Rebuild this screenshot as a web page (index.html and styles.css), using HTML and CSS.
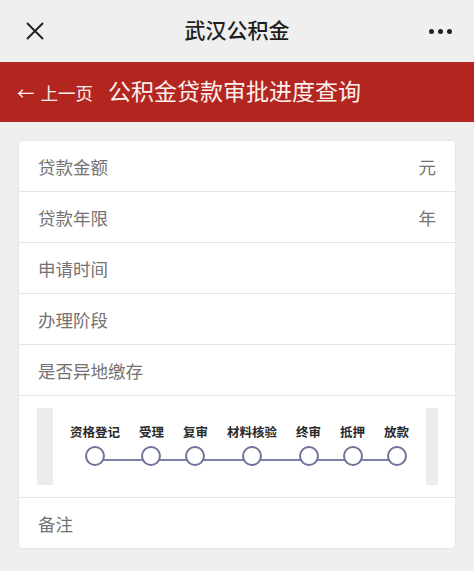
FILE: index.html
```html
<!DOCTYPE html>
<html lang="zh-CN">
<head>
  <meta charset="UTF-8">
  <meta name="viewport" content="width=device-width, initial-scale=1.0">
  <title>武汉公积金</title>
  <link rel="stylesheet" href="styles.css">
</head>
<body>
  <div class="topbar">
    <svg class="close" width="20" height="20" viewBox="0 0 20 20">
      <path d="M2 2 L18 18 M18 2 L2 18" stroke="#222" stroke-width="2" fill="none"/>
    </svg>
    <div class="topbar-title">武汉公积金</div>
    <div class="more"><span></span><span></span><span></span></div>
  </div>

  <div class="header">
    <div class="back"><span class="arrow">←</span>上一页</div>
    <div class="header-title">公积金贷款审批进度查询</div>
  </div>

  <div class="content">
    <div class="card">
      <div class="row"><span>贷款金额</span><span>元</span></div>
      <div class="row"><span>贷款年限</span><span>年</span></div>
      <div class="row"><span>申请时间</span></div>
      <div class="row"><span>办理阶段</span></div>
      <div class="row"><span>是否异地缴存</span></div>

      <div class="progress-row">
        <div class="progress">
          <div class="steps">
            <div class="step"><div class="step-name">资格登记</div><div class="dot"></div></div>
            <div class="step"><div class="step-name">受理</div><div class="dot"></div></div>
            <div class="step"><div class="step-name">复审</div><div class="dot"></div></div>
            <div class="step"><div class="step-name">材料核验</div><div class="dot"></div></div>
            <div class="step"><div class="step-name">终审</div><div class="dot"></div></div>
            <div class="step"><div class="step-name">抵押</div><div class="dot"></div></div>
            <div class="step"><div class="step-name">放款</div><div class="dot"></div></div>
          </div>
        </div>
      </div>

      <div class="row last"><span>备注</span></div>
    </div>
  </div>
</body>
</html>
```

FILE: styles.css
```css
body {
  margin: 0;
  background-color: #efefef;
  font-family: "Noto Sans CJK SC", "Noto Sans", sans-serif;
  height: 571px;
  overflow: hidden;
}

.topbar {
  height: 62px;
  display: flex;
  align-items: center;
  justify-content: space-between;
  padding: 0 22px 0 25px;
  background-color: #efefef;
  position: relative;
}

.topbar-title {
  position: absolute;
  left: 0;
  right: 0;
  text-align: center;
  font-size: 21px;
  font-weight: 500;
  color: #1e1e1e;
  line-height: 62px;
  top: -2px;
}

.more {
  display: flex;
  gap: 4px;
}

.more span {
  width: 5px;
  height: 5px;
  border-radius: 50%;
  background-color: #222;
}

.header {
  height: 60px;
  background-color: #b3261f;
  display: flex;
  align-items: center;
  color: #fdf1ef;
  padding-left: 17px;
}

.back {
  font-size: 17.5px;
  margin-right: 15px;
}

.back .arrow {
  margin-right: 6px;
}

.header-title {
  font-size: 23px;
  margin-top: -4px;
}

.content {
  padding: 19px 19px 0 19px;
}

.card {
  background-color: #fff;
  border-radius: 4px;
  box-shadow: 0 0 2px rgba(0, 0, 0, 0.12);
}

.row {
  height: 50px;
  display: flex;
  align-items: center;
  justify-content: space-between;
  padding: 0 19px 0 19px;
  border-bottom: 1px solid #e4e4e4;
  font-size: 17.5px;
  color: #737373;
}

.row.last {
  border-bottom: none;
}

.progress-row {
  padding: 12px 17px 12px 18px;
  border-bottom: 1px solid #e4e4e4;
}

.progress {
  height: 77px;
  border-left: 16px solid #ececec;
  border-right: 12px solid #ececec;
  display: flex;
  justify-content: center;
  padding-top: 16px;
  box-sizing: border-box;
}

.steps {
  display: flex;
  gap: 19px;
  position: relative;
  height: 44px;
}

.steps::before {
  content: "";
  position: absolute;
  left: 25px;
  right: 12px;
  top: 35px;
  height: 2px;
  background-color: #7d82a6;
}

.step {
  display: flex;
  flex-direction: column;
  align-items: center;
  position: relative;
}

.step-name {
  font-size: 12.5px;
  font-weight: bold;
  color: #2a2a2a;
  line-height: 16px;
  white-space: nowrap;
}

.dot {
  width: 16px;
  height: 16px;
  border: 2px solid #6d7399;
  border-radius: 50%;
  background-color: #fff;
  margin-top: 6px;
}
```
